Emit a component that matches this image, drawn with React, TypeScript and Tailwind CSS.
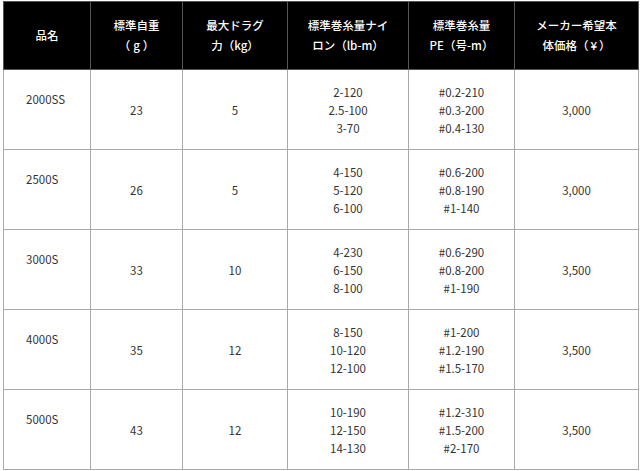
import type { ReactNode } from "react"

const rows = [
  { name: "2000SS", weight: "23", drag: "5", nylon: ["2-120", "2.5-100", "3-70"], pe: ["#0.2-210", "#0.3-200", "#0.4-130"], price: "3,000" },
  { name: "2500S", weight: "26", drag: "5", nylon: ["4-150", "5-120", "6-100"], pe: ["#0.6-200", "#0.8-190", "#1-140"], price: "3,000" },
  { name: "3000S", weight: "33", drag: "10", nylon: ["4-230", "6-150", "8-100"], pe: ["#0.6-290", "#0.8-200", "#1-190"], price: "3,500" },
  { name: "4000S", weight: "35", drag: "12", nylon: ["8-150", "10-120", "12-100"], pe: ["#1-200", "#1.2-190", "#1.5-170"], price: "3,500" },
  { name: "5000S", weight: "43", drag: "12", nylon: ["10-190", "12-150", "14-130"], pe: ["#1.2-310", "#1.5-200", "#2-170"], price: "3,500" },
]

const headers: ReactNode[][] = [
  ["品名"],
  ["標準自重", <>（<span className="mx-[3px]">g</span>）</>],
  ["最大ドラグ", "力（kg）"],
  ["標準巻糸量ナイ", "ロン（lb-m）"],
  ["標準巻糸量", "PE（号-m）"],
  ["メーカー希望本", <>体価格（<span className="mx-[2px]">¥</span>）</>],
]

const widths = ["w-[87px]", "w-[92px]", "w-[105px]", "w-[121px]", "w-[106px]", "w-[124px]"]

export default function App() {
  return (
    <div className="w-[640px] h-[471px] bg-white pt-px pl-[3px] font-['Noto_Sans_CJK_JP','Noto_Sans',sans-serif]">
      <table className="table-fixed border-collapse w-[635px] text-[11.5px] leading-[18px]">
        <colgroup>
          {widths.map((w, i) => (
            <col key={i} className={w} />
          ))}
        </colgroup>
        <thead>
          <tr className="h-[68px] bg-black text-white">
            {headers.map((h, i) => (
              <th key={i} className="border border-[#555] font-medium text-center align-middle leading-[20px] pb-[2px]">
                {h.map((line, j) => (
                  <div key={j}>{line}</div>
                ))}
              </th>
            ))}
          </tr>
        </thead>
        <tbody className="text-[#333]">
          {rows.map((r) => (
            <tr key={r.name} className="h-[80px]">
              <td className="border border-[#aaa] pl-[22px] pb-[22px] align-middle">{r.name}</td>
              <td className="border border-[#aaa] text-center align-middle">{r.weight}</td>
              <td className="border border-[#aaa] text-center align-middle">{r.drag}</td>
              <td className="border border-[#aaa] text-center align-middle">
                {r.nylon.map((v) => (
                  <div key={v}>{v}</div>
                ))}
              </td>
              <td className="border border-[#aaa] text-center align-middle">
                {r.pe.map((v) => (
                  <div key={v}>{v}</div>
                ))}
              </td>
              <td className="border border-[#aaa] text-center align-middle">{r.price}</td>
            </tr>
          ))}
        </tbody>
      </table>
    </div>
  )
}
